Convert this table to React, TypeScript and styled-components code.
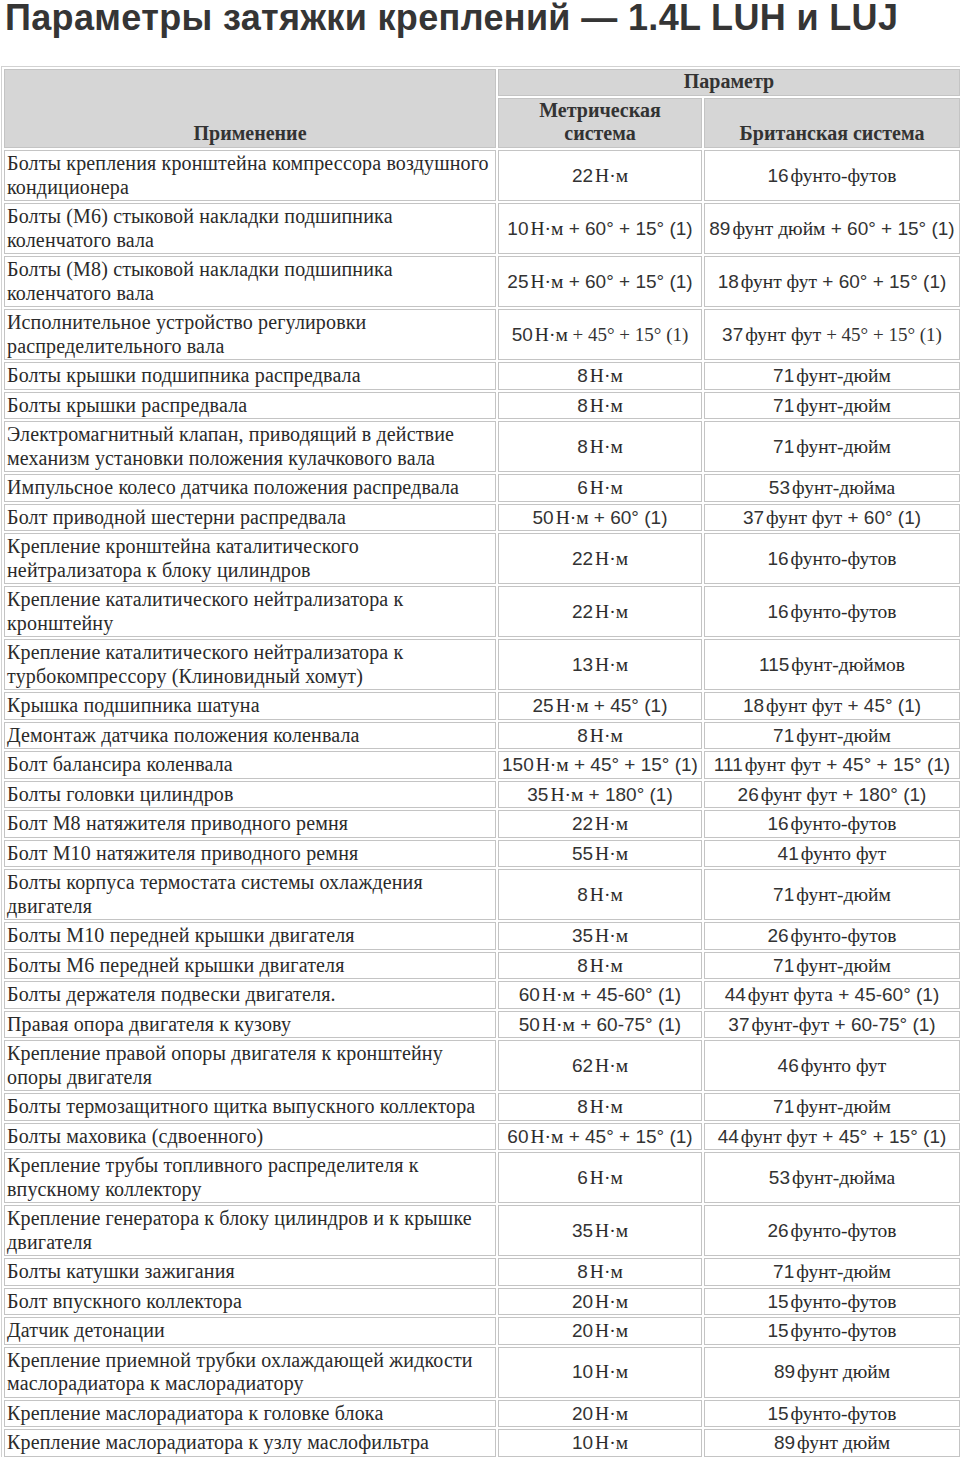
import React from "react";
import styled, { createGlobalStyle } from "styled-components";

const GlobalStyle = createGlobalStyle`
  html, body {
    margin: 0;
    padding: 0;
    background: #ffffff;
  }
  body {
    font-family: "Liberation Serif", "Times New Roman", serif;
    color: #2a2a2a;
  }
`;

type Val = { n: string; u: string; tail?: string; serifTail?: boolean };
type Row = { name: string[]; m: Val; b: Val };

const rows: Row[] = [
  { name: ["Болты крепления кронштейна компрессора воздушного", "кондиционера"], m: { n: "22", u: "Н·м" }, b: { n: "16", u: "фунто-футов" } },
  { name: ["Болты (М6) стыковой накладки подшипника", "коленчатого вала"], m: { n: "10", u: "Н·м", tail: "+ 60° + 15° (1)" }, b: { n: "89", u: "фунт дюйм", tail: "+ 60° + 15° (1)" } },
  { name: ["Болты (М8) стыковой накладки подшипника", "коленчатого вала"], m: { n: "25", u: "Н·м", tail: "+ 60° + 15° (1)" }, b: { n: "18", u: "фунт фут", tail: "+ 60° + 15° (1)" } },
  { name: ["Исполнительное устройство регулировки", "распределительного вала"], m: { n: "50", u: "Н·м", tail: "+ 45° + 15° (1)", serifTail: true }, b: { n: "37", u: "фунт фут", tail: "+ 45° + 15° (1)", serifTail: true } },
  { name: ["Болты крышки подшипника распредвала"], m: { n: "8", u: "Н·м" }, b: { n: "71", u: "фунт-дюйм" } },
  { name: ["Болты крышки распредвала"], m: { n: "8", u: "Н·м" }, b: { n: "71", u: "фунт-дюйм" } },
  { name: ["Электромагнитный клапан, приводящий в действие", "механизм установки положения кулачкового вала"], m: { n: "8", u: "Н·м" }, b: { n: "71", u: "фунт-дюйм" } },
  { name: ["Импульсное колесо датчика положения распредвала"], m: { n: "6", u: "Н·м" }, b: { n: "53", u: "фунт-дюйма" } },
  { name: ["Болт приводной шестерни распредвала"], m: { n: "50", u: "Н·м", tail: "+ 60° (1)" }, b: { n: "37", u: "фунт фут", tail: "+ 60° (1)" } },
  { name: ["Крепление кронштейна каталитического", "нейтрализатора к блоку цилиндров"], m: { n: "22", u: "Н·м" }, b: { n: "16", u: "фунто-футов" } },
  { name: ["Крепление каталитического нейтрализатора к", "кронштейну"], m: { n: "22", u: "Н·м" }, b: { n: "16", u: "фунто-футов" } },
  { name: ["Крепление каталитического нейтрализатора к", "турбокомпрессору (Клиновидный хомут)"], m: { n: "13", u: "Н·м" }, b: { n: "115", u: "фунт-дюймов" } },
  { name: ["Крышка подшипника шатуна"], m: { n: "25", u: "Н·м", tail: "+ 45° (1)" }, b: { n: "18", u: "фунт фут", tail: "+ 45° (1)" } },
  { name: ["Демонтаж датчика положения коленвала"], m: { n: "8", u: "Н·м" }, b: { n: "71", u: "фунт-дюйм" } },
  { name: ["Болт балансира коленвала"], m: { n: "150", u: "Н·м", tail: "+ 45° + 15° (1)" }, b: { n: "111", u: "фунт фут", tail: "+ 45° + 15° (1)" } },
  { name: ["Болты головки цилиндров"], m: { n: "35", u: "Н·м", tail: "+ 180° (1)" }, b: { n: "26", u: "фунт фут", tail: "+ 180° (1)" } },
  { name: ["Болт М8 натяжителя приводного ремня"], m: { n: "22", u: "Н·м" }, b: { n: "16", u: "фунто-футов" } },
  { name: ["Болт М10 натяжителя приводного ремня"], m: { n: "55", u: "Н·м" }, b: { n: "41", u: "фунто фут" } },
  { name: ["Болты корпуса термостата системы охлаждения", "двигателя"], m: { n: "8", u: "Н·м" }, b: { n: "71", u: "фунт-дюйм" } },
  { name: ["Болты М10 передней крышки двигателя"], m: { n: "35", u: "Н·м" }, b: { n: "26", u: "фунто-футов" } },
  { name: ["Болты М6 передней крышки двигателя"], m: { n: "8", u: "Н·м" }, b: { n: "71", u: "фунт-дюйм" } },
  { name: ["Болты держателя подвески двигателя."], m: { n: "60", u: "Н·м", tail: "+ 45-60° (1)" }, b: { n: "44", u: "фунт фута", tail: "+ 45-60° (1)" } },
  { name: ["Правая опора двигателя к кузову"], m: { n: "50", u: "Н·м", tail: "+ 60-75° (1)" }, b: { n: "37", u: "фунт-фут", tail: "+ 60-75° (1)" } },
  { name: ["Крепление правой опоры двигателя к кронштейну", "опоры двигателя"], m: { n: "62", u: "Н·м" }, b: { n: "46", u: "фунто фут" } },
  { name: ["Болты термозащитного щитка выпускного коллектора"], m: { n: "8", u: "Н·м" }, b: { n: "71", u: "фунт-дюйм" } },
  { name: ["Болты маховика (сдвоенного)"], m: { n: "60", u: "Н·м", tail: "+ 45° + 15° (1)" }, b: { n: "44", u: "фунт фут", tail: "+ 45° + 15° (1)" } },
  { name: ["Крепление трубы топливного распределителя к", "впускному коллектору"], m: { n: "6", u: "Н·м" }, b: { n: "53", u: "фунт-дюйма" } },
  { name: ["Крепление генератора к блоку цилиндров и к крышке", "двигателя"], m: { n: "35", u: "Н·м" }, b: { n: "26", u: "фунто-футов" } },
  { name: ["Болты катушки зажигания"], m: { n: "8", u: "Н·м" }, b: { n: "71", u: "фунт-дюйм" } },
  { name: ["Болт впускного коллектора"], m: { n: "20", u: "Н·м" }, b: { n: "15", u: "фунто-футов" } },
  { name: ["Датчик детонации"], m: { n: "20", u: "Н·м" }, b: { n: "15", u: "фунто-футов" } },
  { name: ["Крепление приемной трубки охлаждающей жидкости", "маслорадиатора к маслорадиатору"], m: { n: "10", u: "Н·м" }, b: { n: "89", u: "фунт дюйм" } },
  { name: ["Крепление маслорадиатора к головке блока"], m: { n: "20", u: "Н·м" }, b: { n: "15", u: "фунто-футов" } },
  { name: ["Крепление маслорадиатора к узлу маслофильтра"], m: { n: "10", u: "Н·м" }, b: { n: "89", u: "фунт дюйм" } },
];

const Page = styled.div`
  width: 960px;
`;

const Title = styled.h1`
  margin: 0;
  padding: 1px 0 0 5px;
  height: 65px;
  font-family: "Liberation Sans", Arial, sans-serif;
  font-weight: 700;
  font-size: 36px;
  line-height: 34px;
  color: #353535;
  letter-spacing: 0.35px;
  white-space: nowrap;
`;

const Table = styled.table`
  margin-left: 1px;
  width: 958px;
  table-layout: fixed;
  border-collapse: separate;
  border-spacing: 2px;
  border: 1px solid #d2d2d2;
`;

const HeadCell = styled.th<{ $align?: "bottom" | "middle" }>`
  background: #d6d6d6;
  border: 1px solid #c4c4c4;
  padding: 0 2px 2px;
  font-weight: 700;
  font-size: 20px;
  line-height: 23px;
  color: #333;
  text-align: center;
  vertical-align: ${(p) => p.$align ?? "bottom"};
  white-space: nowrap;
`;

const Cell = styled.td<{ $center?: boolean }>`
  border: 1px solid #c4c4c4;
  padding: 1px 2px 1px;
  font-size: 20px;
  letter-spacing: ${(p) => (p.$center ? "0" : "0.15px")};
  line-height: 23.5px;
  color: #2a2a2a;
  text-align: ${(p) => (p.$center ? "center" : "left")};
  vertical-align: middle;
  white-space: nowrap;
  overflow: hidden;
`;

const Num = styled.span`
  font-family: "Liberation Sans", Arial, sans-serif;
  font-size: 19px;
  color: #333;
`;

const Unit = styled.span`
  font-family: "Liberation Serif", "Times New Roman", serif;
  font-size: 19.5px;
  margin-left: 2px;
`;

const Tail = styled.span<{ $serif?: boolean }>`
  font-family: ${(p) =>
    p.$serif ? `"Liberation Serif", "Times New Roman", serif` : `"Liberation Sans", Arial, sans-serif`};
  font-size: 19px;
  color: #333;
`;

function Value({ v }: { v: Val }) {
  return (
    <>
      <Num>{v.n}</Num>
      <Unit>{v.u}</Unit>
      {v.tail && <Tail $serif={v.serifTail}> {v.tail}</Tail>}
    </>
  );
}

export default function App() {
  return (
    <Page>
      <GlobalStyle />
      <Title>Параметры затяжки креплений — 1.4L LUH и LUJ</Title>
      <Table>
        <colgroup>
          <col style={{ width: 492 }} />
          <col style={{ width: 204 }} />
          <col style={{ width: 256 }} />
        </colgroup>
        <thead>
          <tr>
            <HeadCell rowSpan={2}>Применение</HeadCell>
            <HeadCell colSpan={2} $align="middle">
              Параметр
            </HeadCell>
          </tr>
          <tr>
            <HeadCell>
              Метрическая
              <br />
              система
            </HeadCell>
            <HeadCell>Британская система</HeadCell>
          </tr>
        </thead>
        <tbody>
          {rows.map((r, i) => (
            <tr key={i}>
              <Cell>
                {r.name.map((line, j) => (
                  <React.Fragment key={j}>
                    {j > 0 && <br />}
                    {line}
                  </React.Fragment>
                ))}
              </Cell>
              <Cell $center>
                <Value v={r.m} />
              </Cell>
              <Cell $center>
                <Value v={r.b} />
              </Cell>
            </tr>
          ))}
        </tbody>
      </Table>
    </Page>
  );
}
